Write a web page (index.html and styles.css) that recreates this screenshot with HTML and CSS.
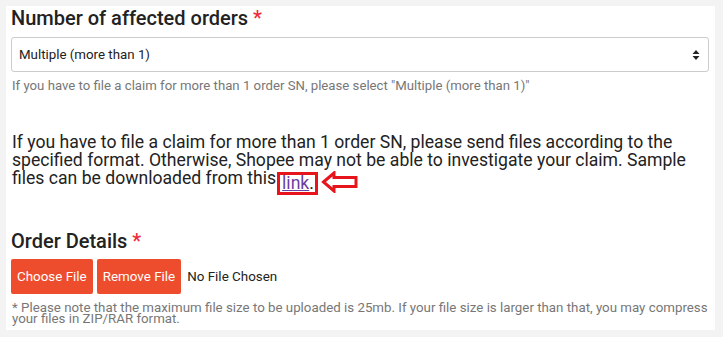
FILE: index.html
```html
<!DOCTYPE html>
<html lang="en">
<head>
    <meta charset="UTF-8">
    <title>Claim Form</title>
    <link rel="stylesheet" href="styles.css">
</head>
<body>
    <div class="panel">
        <div class="field">
            <h2 class="label">Number of affected orders <span class="req">*</span></h2>
            <div class="select">
                <span>Multiple (more than 1)</span>
                <svg class="caret" width="8" height="12" viewBox="0 0 8 12">
                    <path d="M4 1 L7.5 5 L0.5 5 Z M4 11 L7.5 7 L0.5 7 Z" fill="#222"/>
                </svg>
            </div>
            <p class="hint">If you have to file a claim for more than 1 order SN, please select "Multiple (more than 1)"</p>
        </div>

        <p class="notice">If you have to file a claim for more than 1 order SN, please send files according to the specified format. Otherwise, Shopee may not be able to investigate your claim. Sample files can be downloaded from this<span class="mark"><a href="#">link</a>.</span><svg class="arrow" width="37" height="22" viewBox="0 0 37 22">
                <path d="M2.5 11 L13 2 L13 6.5 L35 6.5 L35 15.5 L13 15.5 L13 20 Z" fill="none" stroke="#e8141c" stroke-width="3"/>
            </svg></p>

        <div class="field">
            <h2 class="label">Order Details <span class="req">*</span></h2>
            <div class="upload">
                <button class="btn">Choose File</button>
                <button class="btn">Remove File</button>
                <span class="filename">No File Chosen</span>
            </div>
            <p class="note">* Please note that the maximum file size to be uploaded is 25mb. If your file size is larger than that, you may compress your files in ZIP/RAR format.</p>
        </div>
    </div>
</body>
</html>
```

FILE: styles.css
```css
body {
    margin: 0;
    padding: 6px 8px 6px 6px;
    background-color: #f3f3f3;
    font-family: Roboto, "Liberation Sans", sans-serif;
    color: #222;
}
.panel {
    background-color: #fff;
    padding: 0 6px 6px 5px;
}
.label {
    margin: 0;
    font-size: 20px;
    font-weight: 500;
    line-height: 24px;
    color: #222;
}
.req {
    color: #ee2d3d;
}
.select {
    margin-top: 7px;
    height: 33px;
    border: 1px solid #ccc;
    border-radius: 3px;
    display: flex;
    align-items: center;
    justify-content: space-between;
    padding: 0 8px 0 7px;
    font-size: 13.3px;
    color: #222;
}
.caret {
    display: block;
}
.hint {
    margin: 6px 0 0 1px;
    font-size: 13.2px;
    line-height: 15px;
    color: #777;
}
.notice {
    margin: 40px 0 0 1px;
    font-size: 17.6px;
    line-height: 18px;
    color: #222;
}
.mark {
    display: inline-block;
    border: 3px solid #e8141c;
    padding: 0 1px 0 2px;
    height: 17px;
    line-height: 17px;
    margin: -3px 0 -3px 1px;
    vertical-align: -5px;
}
.mark a {
    color: #6b3fa0;
}
.arrow {
    vertical-align: -5px;
    margin-left: 3px;
    margin-top: -4px;
    margin-bottom: -4px;
}
.notice + .field {
    margin-top: 37px;
}
.upload {
    margin-top: 6px;
    display: flex;
    align-items: center;
    gap: 4px;
}
.btn {
    background-color: #ee4d2d;
    color: #fff;
    border: none;
    border-radius: 2px;
    height: 35px;
    padding: 0 6px;
    font-family: Roboto, "Liberation Sans", sans-serif;
    font-size: 13.4px;
}
.filename {
    font-size: 13.4px;
    margin-left: 2px;
}
.note {
    margin: 8px 0 0 1px;
    font-size: 13.3px;
    line-height: 11px;
    color: #777;
}
```
